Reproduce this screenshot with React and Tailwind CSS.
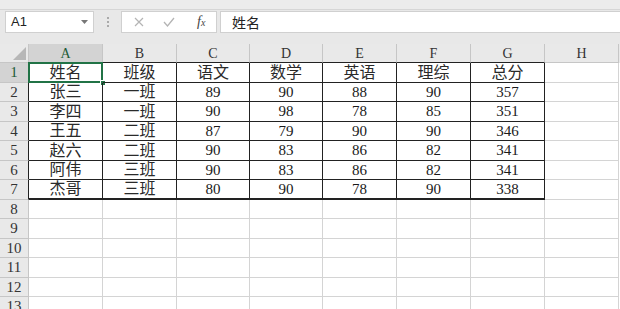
import React from 'react';

const cols = [
  { key: 'A', w: 'w-[74px]' },
  { key: 'B', w: 'w-[74px]' },
  { key: 'C', w: 'w-[73px]' },
  { key: 'D', w: 'w-[73px]' },
  { key: 'E', w: 'w-[74px]' },
  { key: 'F', w: 'w-[74px]' },
  { key: 'G', w: 'w-[74px]' },
  { key: 'H', w: 'w-[74px]' },
];

const data = [
  ['姓名', '班级', '语文', '数学', '英语', '理综', '总分'],
  ['张三', '一班', '89', '90', '88', '90', '357'],
  ['李四', '一班', '90', '98', '78', '85', '351'],
  ['王五', '二班', '87', '79', '90', '90', '346'],
  ['赵六', '二班', '90', '83', '86', '82', '341'],
  ['阿伟', '三班', '90', '83', '86', '82', '341'],
  ['杰哥', '三班', '80', '90', '78', '90', '338'],
];

// heights alternate so the lines land where the sheet draws them (~19.5px pitch)
const rowHeights = [
  'h-[20px]', 'h-[19px]', 'h-[20px]', 'h-[19px]', 'h-[20px]', 'h-[19px]', 'h-[20px]',
  'h-[19px]', 'h-[20px]', 'h-[19px]', 'h-[20px]', 'h-[19px]', 'h-[20px]',
];

const cellFont = { fontFamily: '"Liberation Serif", "Noto Sans CJK SC", serif' };
const isNum = (v) => /^\d+$/.test(v);

const NameBox = () => (
  <div className="w-[89px] h-[22px] bg-white border border-[#d0d0d0] flex items-center justify-between pl-[5px] pr-[5px]">
    <span className="text-[13px] text-[#222]" style={{ fontFamily: '"Liberation Sans", Arial, sans-serif' }}>A1</span>
    <svg width="7" height="4" viewBox="0 0 7 4"><path d="M0 0h7L3.5 4z" fill="#777" /></svg>
  </div>
);

const FormulaButtons = () => (
  <div className="w-[96px] h-[22px] bg-white border border-[#d0d0d0] flex items-center pl-[12px] gap-[19px]">
    <svg width="10" height="10" viewBox="0 0 10 10">
      <path d="M1 1l8 8M9 1l-8 8" stroke="#b4b4b4" strokeWidth="1.2" />
    </svg>
    <svg width="12" height="10" viewBox="0 0 12 10">
      <path d="M1 5l3.5 4L11 1" stroke="#b4b4b4" strokeWidth="1.3" fill="none" />
    </svg>
    <span className="text-[14px] italic text-[#444] ml-[3px] leading-none" style={{ fontFamily: '"Liberation Serif", serif' }}>
      f<span className="text-[10px]">x</span>
    </span>
  </div>
);

const Toolbar = () => (
  <div>
    <div className="h-[10px] bg-[#ececec] border-b border-[#d6d6d6]" />
    <div className="h-[34px] bg-[#e8e8e8] flex items-start pt-[1px] pl-[5px]">
      <NameBox />
      <div className="w-[27px] h-[22px] flex flex-col items-center justify-center gap-[2px]">
        <span className="w-[2px] h-[2px] bg-[#aaa]" />
        <span className="w-[2px] h-[2px] bg-[#aaa]" />
        <span className="w-[2px] h-[2px] bg-[#aaa]" />
      </div>
      <FormulaButtons />
      <div className="flex-1 ml-[3px] h-[22px] bg-white border border-[#d0d0d0] border-r-0 flex items-center pl-[11px]">
        <span className="text-[14px] text-[#222]" style={{ fontFamily: '"Noto Sans CJK SC", sans-serif' }}>姓名</span>
      </div>
    </div>
  </div>
);

const HeaderRow = () => (
  <div className="flex h-[19px] bg-[#e9e9e9]">
    <div className="w-[29px] shrink-0 border-r border-b border-[#c6c6c6] relative">
      <svg className="absolute right-[2px] bottom-[2px]" width="13" height="13" viewBox="0 0 13 13">
        <path d="M13 0v13H0z" fill="#b7b7b7" />
      </svg>
    </div>
    {cols.map((c, i) => {
      const sel = i === 0;
      const inTable = i < 7;
      return (
        <div
          key={c.key}
          className={`${c.w} shrink-0 flex items-center justify-center border-r border-[#c6c6c6] border-b ${
            inTable ? 'border-b-[#222]' : 'border-b-[#c6c6c6]'
          } ${sel ? 'bg-[#d3d3d3] text-[#1e5c38]' : 'text-[#333]'} text-[14px]`}
          style={cellFont}
        >
          {c.key}
        </div>
      );
    })}
  </div>
);

const Row = ({ n, h }) => {
  const values = data[n - 1];
  const inTable = n <= 7;
  const last = n === 7;
  return (
    <div className={`flex ${h}`}>
      <div
        className={`w-[29px] shrink-0 flex items-center justify-center border-b border-[#c6c6c6] border-r ${
          inTable ? 'border-r-[#222]' : 'border-r-[#c6c6c6]'
        } ${n === 1 ? 'bg-[#d3d3d3] text-[#1e5c38]' : 'bg-[#e9e9e9] text-[#333]'} text-[15px]`}
        style={cellFont}
      >
        {n}
      </div>
      {cols.map((c, i) => {
        const tableCell = inTable && i < 7;
        let cls = 'border-r border-b border-[#d4d4d4]';
        if (tableCell) cls = last ? 'border-r border-b-2 border-[#222]' : 'border-r border-b border-[#222]';
        const v = tableCell ? values[i] : null;
        return (
          <div
            key={c.key}
            className={`${c.w} shrink-0 relative flex items-center justify-center ${
              v && !isNum(v) ? 'text-[16px] text-[#2a2a2a]' : 'text-[15px] text-[#1a1a1a]'
            } ${cls}`}
            style={cellFont}
          >
            {v}
            {n === 1 && i === 0 && (
              <>
                <div className="absolute -left-[1px] -top-[1px] -right-[1px] -bottom-[1px] border-2 border-[#217346]" />
                <div className="absolute -right-[4px] -bottom-[4px] w-[6px] h-[6px] bg-[#217346] border border-white" />
              </>
            )}
          </div>
        );
      })}
    </div>
  );
};

export default function App() {
  return (
    <div className="w-[620px] h-[309px] overflow-hidden bg-white">
      <Toolbar />
      <HeaderRow />
      {rowHeights.map((h, idx) => (
        <Row key={idx} n={idx + 1} h={h} />
      ))}
    </div>
  );
}
